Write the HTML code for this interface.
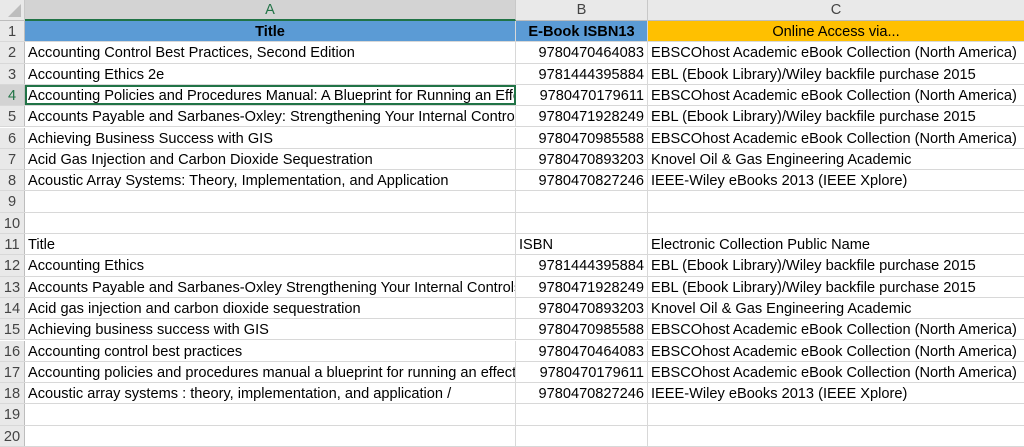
<!DOCTYPE html><html><head><meta charset="utf-8"><style>
body{margin:0;width:1024px;height:429px;overflow:hidden;background:#fff;font-family:"Liberation Sans",sans-serif;font-size:14.6px;color:#000}
.r{position:absolute;left:0;width:1024px;height:21.3px;border-bottom:1px solid #d8d8d8;box-sizing:border-box}
.c{position:absolute;top:0;height:100%;box-sizing:border-box;border-right:1px solid #d8d8d8;white-space:nowrap;overflow:hidden;line-height:21px;padding:1px 3px 0}
.n{left:0;width:25px;background:#e9e9e9;color:#444;text-align:center;padding:1px 0 0;border-right:1px solid #bdbdbd;font-size:14.6px}
.a{left:25px;width:491px}.b{left:516px;width:132px;text-align:right}.cc{left:648px;width:376px;border-right:none}
.hd{position:absolute;top:0;left:0;width:1024px;height:21px;background:#e9e9e9;border-bottom:1px solid #bdbdbd;box-sizing:border-box}
.hd div{position:absolute;top:0;height:21px;line-height:21px;text-align:center;color:#444;border-right:1px solid #c8c8c8;box-sizing:border-box}
</style></head><body>
<div class="hd">
<div style="left:0;width:25px;"><svg width="25" height="21"><polygon points="21,4 21,17 8,17" fill="#bdbdbd"/></svg></div>
<div style="left:25px;width:491px;background:#d3d3d3;color:#217346;border-bottom:2px solid #217346;">A</div>
<div style="left:516px;width:132px">B</div>
<div style="left:648px;width:376px;border-right:none">C</div>
</div>
<div id="rows"></div>
<script>
var d=[
["Title","E-Book ISBN13","Online Access via..."],
["Accounting Control Best Practices, Second Edition","9780470464083","EBSCOhost Academic eBook Collection (North America)"],
["Accounting Ethics 2e","9781444395884","EBL (Ebook Library)/Wiley backfile purchase 2015"],
["Accounting Policies and Procedures Manual: A Blueprint for Running an Effective","9780470179611","EBSCOhost Academic eBook Collection (North America)"],
["Accounts Payable and Sarbanes-Oxley: Strengthening Your Internal Controls","9780471928249","EBL (Ebook Library)/Wiley backfile purchase 2015"],
["Achieving Business Success with GIS","9780470985588","EBSCOhost Academic eBook Collection (North America)"],
["Acid Gas Injection and Carbon Dioxide Sequestration","9780470893203","Knovel Oil &amp; Gas Engineering Academic"],
["Acoustic Array Systems: Theory, Implementation, and Application","9780470827246","IEEE-Wiley eBooks 2013 (IEEE Xplore)"],
["","",""],["","",""],
["Title","ISBN","Electronic Collection Public Name"],
["Accounting Ethics","9781444395884","EBL (Ebook Library)/Wiley backfile purchase 2015"],
["Accounts Payable and Sarbanes-Oxley Strengthening Your Internal Controls","9780471928249","EBL (Ebook Library)/Wiley backfile purchase 2015"],
["Acid gas injection and carbon dioxide sequestration","9780470893203","Knovel Oil &amp; Gas Engineering Academic"],
["Achieving business success with GIS","9780470985588","EBSCOhost Academic eBook Collection (North America)"],
["Accounting control best practices","9780470464083","EBSCOhost Academic eBook Collection (North America)"],
["Accounting policies and procedures manual a blueprint for running an effective","9780470179611","EBSCOhost Academic eBook Collection (North America)"],
["Acoustic array systems : theory, implementation, and application /","9780470827246","IEEE-Wiley eBooks 2013 (IEEE Xplore)"],
["","",""],["","",""]];
var h="";
for(var i=0;i<d.length;i++){var t=21+i*21.3;var r=d[i];
var sa="",sb="",sc="",sn="";
if(i==0){sa="background:#5b9bd5;font-weight:bold;text-align:center;";sb="background:#5b9bd5;font-weight:bold;text-align:center;";sc="background:#ffc000;text-align:center;border-right:none;";}
if(i==3){sa="outline:2px solid #217346;outline-offset:-2px;";sn="color:#217346;background:#d3d3d3;";}
if(i==10){sb="text-align:left;";}
h+='<div class="r" style="top:'+t+'px"><div class="c n" style="'+sn+'">'+(i+1)+'</div><div class="c a" style="'+sa+'">'+r[0]+'</div><div class="c b" style="'+sb+'">'+r[1]+'</div><div class="c cc" style="'+sc+'">'+r[2]+'</div></div>';}
document.getElementById("rows").innerHTML=h;
</script>
</body></html>
